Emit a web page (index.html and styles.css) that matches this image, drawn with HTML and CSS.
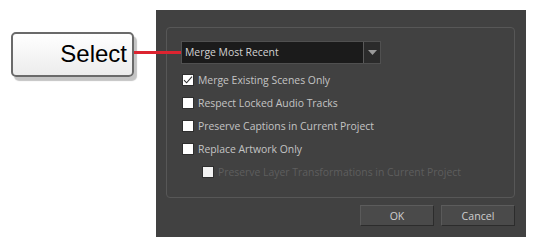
FILE: index.html
```html
<!DOCTYPE html>
<html>
<head>
<meta charset="utf-8">
<link rel="stylesheet" href="styles.css">
</head>
<body>
<div class="stage">
  <div class="callout">Select</div>
  <div class="connector"></div>
  <div class="dialog">
    <div class="group">
      <div class="combo">
        <span class="combo-text">Merge Most Recent</span>
        <span class="combo-btn"><svg width="9" height="5" viewBox="0 0 9 5"><path d="M0 0H9L4.5 5Z" fill="#9a9a9a"/></svg></span>
      </div>
      <div class="rows">
        <label class="row"><span class="box"><svg width="12" height="12" viewBox="0 0 12 12"><path d="M2 6.2L4.6 8.8L10 2.6" fill="none" stroke="#333" stroke-width="1.1"/></svg></span><span class="lbl">Merge Existing Scenes Only</span></label>
        <label class="row"><span class="box"></span><span class="lbl">Respect Locked Audio Tracks</span></label>
        <label class="row"><span class="box"></span><span class="lbl">Preserve Captions in Current Project</span></label>
        <label class="row"><span class="box"></span><span class="lbl">Replace Artwork Only</span></label>
        <label class="row sub disabled"><span class="box"></span><span class="lbl">Preserve Layer Transformations in Current Project</span></label>
      </div>
    </div>
    <div class="buttons">
      <button class="btn">OK</button>
      <button class="btn">Cancel</button>
    </div>
  </div>
</div>
</body>
</html>
```
FILE: styles.css
```css
html, body {
  margin: 0;
  padding: 0;
  background: #ffffff;
}
body {
  width: 536px;
  height: 247px;
  overflow: hidden;
  font-family: "Open Sans", "Noto Sans", sans-serif;
}
.stage {
  position: relative;
  display: flex;
  align-items: flex-start;
  padding: 10px 0 0 11px;
}
.callout {
  margin-top: 22px;
  box-sizing: border-box;
  width: 123px;
  height: 45px;
  border: 2px solid #6a6a6a;
  border-radius: 5px;
  background: linear-gradient(#ffffff, #ececec);
  box-shadow: 3px 4px 1px #c4c4c4;
  font-family: "Liberation Sans", Arial, sans-serif;
  font-size: 24px;
  color: #000;
  text-align: right;
  padding-right: 5px;
  line-height: 40px;
}
.connector {
  position: absolute;
  left: 134px;
  top: 51px;
  width: 47px;
  height: 3px;
  background: #dc2430;
  z-index: 2;
}
.dialog {
  margin-left: 22px;
  box-sizing: border-box;
  width: 370px;
  height: 227px;
  background: #414141;
  padding: 17px 11px 0 10px;
}
.group {
  box-sizing: border-box;
  height: 171px;
  border: 1px solid #575757;
  border-radius: 4px;
  padding: 13px 0 0 14px;
}
.combo {
  box-sizing: border-box;
  width: 200px;
  height: 23px;
  display: flex;
  background: #1b1b1b;
  border: 1px solid #505050;
}
.combo-text {
  flex: 1;
  font-size: 10.4px;
  color: #d2d2d2;
  line-height: 21px;
  padding-left: 3px;
}
.combo-btn {
  width: 16px;
  background: #2b2b2b;
  border-left: 1px solid #5a5a5a;
  display: flex;
  align-items: center;
  justify-content: center;
}
.rows {
  display: flex;
  flex-direction: column;
  gap: 11px;
  margin-top: 10px;
  padding-left: 1px;
}
.row {
  display: flex;
  align-items: center;
  height: 12px;
  font-size: 10.4px;
  color: #c4c4c4;
}
.row.sub {
  padding-left: 20px;
}
.row.disabled {
  color: #5e5e5e;
}
.box {
  box-sizing: border-box;
  width: 12px;
  height: 12px;
  background: #ffffff;
  border: 1px solid #2e2e2e;
  display: flex;
  margin-right: 4px;
}
.box svg {
  margin: -1px;
}
.disabled .box {
  background: #f2f2f2;
}
.lbl {
  white-space: nowrap;
  line-height: 12px;
}
.buttons {
  display: flex;
  justify-content: flex-end;
  gap: 7px;
  margin-top: 7px;
}
.btn {
  box-sizing: border-box;
  width: 74px;
  height: 21px;
  background: #4a4a4a;
  border: 1px solid #2c2c2c;
  border-top-color: #5c5c5c;
  border-left-color: #5a5a5a;
  color: #cfcfcf;
  font-family: "Open Sans", "Noto Sans", sans-serif;
  font-size: 10.6px;
  padding: 0;
}
```
